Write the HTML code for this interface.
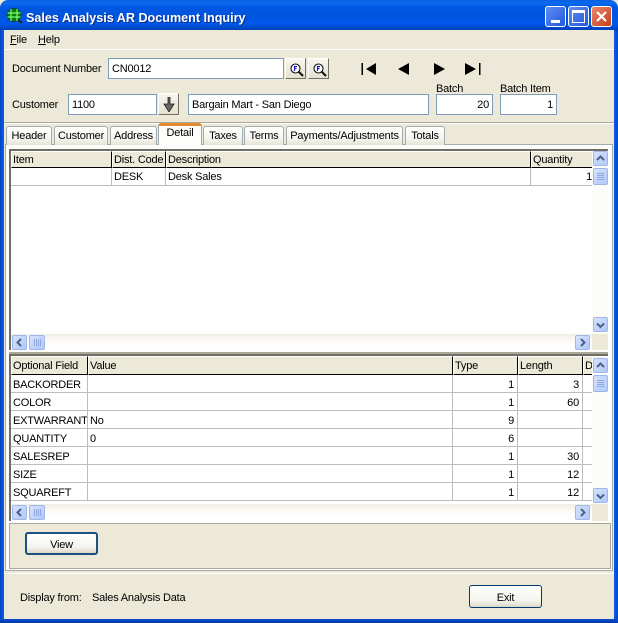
<!DOCTYPE html>
<html><head><meta charset="utf-8"><style>
html,body{margin:0;padding:0;background:#fff}
#w{position:relative;width:618px;height:623px;overflow:hidden;font:11px "Liberation Sans",sans-serif;letter-spacing:-.2px;color:#000;background:#ece9d8}
#w div,#w svg{position:absolute}
.t{white-space:nowrap;line-height:14px}
.in{background:#fff;border:1px solid #7f9db9;box-sizing:border-box;line-height:20px;padding-left:3px;white-space:nowrap}
.r{text-align:right;padding-right:3px;padding-left:0}
.tb{box-sizing:border-box;border:1px solid #a3acad;border-bottom:0;border-radius:3px 3px 0 0;background:linear-gradient(#fff,#f3f3ec 70%,#e6e3d4);text-align:center;line-height:18px;white-space:nowrap;height:19px;top:126px}
.ib{box-sizing:border-box;width:21px;height:21px;background:linear-gradient(#f6f5ee,#e4e1d0);border:1px solid;border-color:#fff #716f64 #716f64 #fff}
.h{background:#ece9d8;border-right:1px solid #000;border-left:1px solid #fff;border-top:1px solid #fff;box-sizing:border-box;line-height:16px;padding-left:1px;white-space:nowrap;overflow:hidden;border-bottom:1px solid #000}
.c{box-sizing:border-box;border-right:1px solid #bdbdbd;border-bottom:1px solid #bdbdbd;line-height:19px;padding-left:2px;white-space:nowrap;overflow:hidden;background:#fff}
.d{line-height:20px}
.n{text-align:right;padding-right:3px}
.sb{box-sizing:border-box;width:15px;height:15px;background:linear-gradient(135deg,#d6e2fe,#b0c8fa);border:1px solid #fff;border-radius:2px;outline:1px solid #9fb6e8;outline-offset:-1px}
.tr{background:repeating-conic-gradient(#fff 0 25%,#f9f8f2 0 50%) 0 0/2px 2px}
.th{background:linear-gradient(#efeee5,#fbfaf6 6px,#fff 12px)}
.btn{box-sizing:border-box;width:73px;height:23px;border:1px solid #003c74;border-radius:3px;background:linear-gradient(#fff,#f4f4ee 70%,#dcd8c8);text-align:center;line-height:24px}
</style></head><body><div id="w">
<div style="left:0;top:0;width:618px;height:30px;border-radius:8px 8px 0 0;background:linear-gradient(#0a5fe0 0,#0a6af0 3px,#0058e2 7px,#0054de 15px,#0058ea 24px,#0049c8 28px,#0040b8 30px)"></div>
<div style="left:0;top:30px;width:4px;height:593px;background:linear-gradient(90deg,#0040c0,#0855dd 50%,#0a5ae8)"></div>
<div style="left:614px;top:30px;width:4px;height:593px;background:linear-gradient(90deg,#0a5ae8,#0855dd 50%,#0040c0)"></div>
<div style="left:0;top:619px;width:618px;height:4px;background:linear-gradient(#0a4fd0,#0038a8)"></div>
<svg style="left:6px;top:8px" width="17" height="16" viewBox="0 0 17 16"><ellipse cx="8" cy="7" rx="7" ry="6.500" fill="#0c7a0c" stroke="#044"/><path d="M1.500 5h13M1.500 9h13M5 1v12M11 1v12" stroke="#7f7" stroke-width="1.200"/><path d="M12 12l4 3" stroke="#222" stroke-width="2"/></svg>
<div class="t" style="left:26px;top:11px;font:bold 12.6px/15px 'Liberation Sans',sans-serif;letter-spacing:0;color:#fff;text-shadow:1px 1px 0 #0a2d8a">Sales Analysis AR Document Inquiry</div>
<div style="left:545px;top:6px;width:21px;height:21px;box-sizing:border-box;border:1px solid #fff;border-radius:3px;background:linear-gradient(135deg,#5e8ff0,#2258dc)"><div style="left:5px;top:13px;width:9px;height:3px;background:#fff"></div></div>
<div style="left:568px;top:6px;width:21px;height:21px;box-sizing:border-box;border:1px solid #fff;border-radius:3px;background:linear-gradient(135deg,#5e8ff0,#2258dc)"><div style="left:3px;top:3px;width:13px;height:13px;box-sizing:border-box;border:1px solid #fff;border-top-width:3px"></div></div>
<div style="left:591px;top:6px;width:21px;height:21px;box-sizing:border-box;border:1px solid #fff;border-radius:3px;background:linear-gradient(135deg,#e8866a,#c4401c)"><svg style="left:4px;top:4px" width="11" height="11"><path d="M1 1l9 9M10 1l-9 9" stroke="#fff" stroke-width="2.200"/></svg></div>
<div class="t" style="left:10px;top:33px"><u>F</u>ile</div>
<div class="t" style="left:38px;top:33px"><u>H</u>elp</div>
<div style="left:4px;top:49px;width:610px;height:1px;background:#fff"></div>
<div class="t" style="left:12px;top:62px">Document Number</div>
<div class="in" style="left:108px;top:58px;width:176px;height:21px">CN0012</div>
<div class="ib" style="left:285px;top:58px"><svg style="left:3px;top:3px" width="15" height="15"><circle cx="6.500" cy="6.500" r="4.500" fill="#fff" stroke="#111" stroke-width="1.100"/><path d="M10 10l4 4" stroke="#111" stroke-width="2"/><path d="M5.500 9V4.500h2.500M5.500 6.500h2" stroke="#1a1ad0" stroke-width="1.200" fill="none"/></svg></div>
<div class="ib" style="left:308px;top:58px"><svg style="left:3px;top:3px" width="15" height="15"><circle cx="6.500" cy="6.500" r="4.500" fill="#fff" stroke="#111" stroke-width="1.100"/><path d="M10 10l4 4" stroke="#111" stroke-width="2"/><path d="M5.500 9V4.500h2.500M5.500 6.500h2" stroke="#1a1ad0" stroke-width="1.200" fill="none"/></svg></div>
<svg style="left:361px;top:63px" width="16" height="12"><path d="M0.500 0v12h1.500V0zM15 0v12L5 6z" fill="#000"/></svg>
<svg style="left:397px;top:63px" width="13" height="12"><path d="M12 0v12L1 6z" fill="#000"/></svg>
<svg style="left:433px;top:63px" width="13" height="12"><path d="M1 0v12L12 6z" fill="#000"/></svg>
<svg style="left:465px;top:63px" width="17" height="12"><path d="M0 0v12L11 6zM14 0v12h1.500V0z" fill="#000"/></svg>
<div class="t" style="left:12px;top:98px">Customer</div>
<div class="in" style="left:68px;top:94px;width:89px;height:21px">1100</div>
<div class="ib" style="left:158px;top:93px;height:22px"><svg style="left:4px;top:3px" width="13" height="15"><path d="M5 0h2v7h4l-5 8-5-8h4z" fill="#666" stroke="#222" stroke-width=".8"/></svg></div>
<div class="in" style="left:188px;top:94px;width:241px;height:21px">Bargain Mart - San Diego</div>
<div class="t" style="left:436px;top:82px">Batch</div>
<div class="t" style="left:500px;top:82px">Batch Item</div>
<div class="in r" style="left:436px;top:94px;width:57px;height:21px">20</div>
<div class="in r" style="left:500px;top:94px;width:57px;height:21px">1</div>
<div style="left:4px;top:122px;width:610px;height:1px;background:#aca899"></div>
<div style="left:4px;top:123px;width:610px;height:1px;background:#fff"></div>
<div style="left:5px;top:144px;width:608px;height:427px;box-sizing:border-box;border:1px solid #a3acad;background:#fdfdfb"></div>
<div class="tb" style="left:6px;width:46px">Header</div>
<div class="tb" style="left:54px;width:54px">Customer</div>
<div class="tb" style="left:110px;width:47px">Address</div>
<div class="tb" style="left:203px;width:40px">Taxes</div>
<div class="tb" style="left:244px;width:40px">Terms</div>
<div class="tb" style="left:286px;width:117px">Payments/Adjustments</div>
<div class="tb" style="left:405px;width:40px">Totals</div>
<div style="left:158px;top:123px;width:44px;height:22px;box-sizing:border-box;background:#fdfdfb;border:1px solid #a3acad;border-bottom:0;border-top:3px solid #e68b2c;border-radius:3px 3px 0 0;text-align:center;line-height:14px">Detail</div>
<div style="left:9px;top:149px;width:599px;height:201px;background:#fff;border-left:2px solid #716f64;border-top:2px solid #716f64;box-sizing:border-box"></div>
<div class="h" style="left:11px;top:151px;width:101px;height:17px">Item</div>
<div class="h" style="left:112px;top:151px;width:54px;height:17px">Dist. Code</div>
<div class="h" style="left:166px;top:151px;width:365px;height:17px">Description</div>
<div class="h" style="left:531px;top:151px;width:61px;height:17px;border-right:0">Quantity</div>
<div class="c" style="left:11px;top:168px;width:101px;height:18px"></div>
<div class="c" style="left:112px;top:168px;width:54px;height:18px">DESK</div>
<div class="c" style="left:166px;top:168px;width:365px;height:18px">Desk Sales</div>
<div class="c n" style="left:531px;top:168px;width:61px;height:18px;border-right:0;padding-right:0">1</div>
<div class="tr" style="left:592px;top:151px;width:16px;height:183px"></div>
<div class="sb" style="left:593px;top:151px"><svg style="left:2px;top:3px" width="9" height="7"><path d="M1 5l3.500-3.500L8 5" fill="none" stroke="#4d6185" stroke-width="2"/></svg></div>
<div class="sb" style="left:593px;top:168px;height:17px"><svg style="left:3px;top:4px" width="7" height="8"><path d="M0 .5h7M0 2.500h7M0 4.500h7M0 6.500h7" stroke="#8fa8e0"/></svg></div>
<div class="sb" style="left:593px;top:317px"><svg style="left:2px;top:4px" width="9" height="7"><path d="M1 1.500l3.500 3.500L8 1.500" fill="none" stroke="#4d6185" stroke-width="2"/></svg></div>
<div class="th" style="left:11px;top:334px;width:581px;height:16px"></div>
<div style="left:592px;top:334px;width:16px;height:16px;background:#ece9d8"></div>
<div class="sb" style="left:12px;top:335px"><svg style="left:3px;top:2px" width="7" height="9"><path d="M5 1L1.500 4.500 5 8" fill="none" stroke="#4d6185" stroke-width="2"/></svg></div>
<div class="sb" style="left:29px;top:335px;width:16px"><svg style="left:4px;top:3px" width="8" height="7"><path d="M.5 0v7M2.500 0v7M4.500 0v7M6.500 0v7" stroke="#8fa8e0"/></svg></div>
<div class="sb" style="left:575px;top:335px"><svg style="left:3px;top:2px" width="7" height="9"><path d="M2 1l3.500 3.500L2 8" fill="none" stroke="#4d6185" stroke-width="2"/></svg></div>
<div style="left:9px;top:352px;width:599px;height:2px;background:#aca899"></div>
<div style="left:9px;top:354px;width:599px;height:167px;background:#fff;border-left:2px solid #716f64;border-top:2px solid #716f64;box-sizing:border-box"></div>
<div class="h" style="left:11px;top:356px;width:77px;height:19px;line-height:18px">Optional Field</div>
<div class="h" style="left:88px;top:356px;width:365px;height:19px;line-height:18px">Value</div>
<div class="h" style="left:453px;top:356px;width:65px;height:19px;line-height:18px">Type</div>
<div class="h" style="left:518px;top:356px;width:65px;height:19px;line-height:18px">Length</div>
<div class="h" style="left:583px;top:356px;width:9px;height:19px;border-right:0;padding-left:1px;line-height:18px">D</div>
<div class="c d" style="left:11px;top:375px;width:77px;height:18px">BACKORDER</div><div class="c" style="left:88px;top:375px;width:365px;height:18px"></div><div class="c d n" style="left:453px;top:375px;width:65px;height:18px">1</div><div class="c d n" style="left:518px;top:375px;width:65px;height:18px">3</div><div class="c" style="left:583px;top:375px;width:9px;height:18px;border-right:0"></div>
<div class="c d" style="left:11px;top:393px;width:77px;height:18px">COLOR</div><div class="c" style="left:88px;top:393px;width:365px;height:18px"></div><div class="c d n" style="left:453px;top:393px;width:65px;height:18px">1</div><div class="c d n" style="left:518px;top:393px;width:65px;height:18px">60</div><div class="c" style="left:583px;top:393px;width:9px;height:18px;border-right:0"></div>
<div class="c d" style="left:11px;top:411px;width:77px;height:18px">EXTWARRANTY</div><div class="c d" style="left:88px;top:411px;width:365px;height:18px">No</div><div class="c d n" style="left:453px;top:411px;width:65px;height:18px">9</div><div class="c d n" style="left:518px;top:411px;width:65px;height:18px"></div><div class="c" style="left:583px;top:411px;width:9px;height:18px;border-right:0"></div>
<div class="c d" style="left:11px;top:429px;width:77px;height:18px">QUANTITY</div><div class="c d" style="left:88px;top:429px;width:365px;height:18px">0</div><div class="c d n" style="left:453px;top:429px;width:65px;height:18px">6</div><div class="c d n" style="left:518px;top:429px;width:65px;height:18px"></div><div class="c" style="left:583px;top:429px;width:9px;height:18px;border-right:0"></div>
<div class="c d" style="left:11px;top:447px;width:77px;height:18px">SALESREP</div><div class="c" style="left:88px;top:447px;width:365px;height:18px"></div><div class="c d n" style="left:453px;top:447px;width:65px;height:18px">1</div><div class="c d n" style="left:518px;top:447px;width:65px;height:18px">30</div><div class="c" style="left:583px;top:447px;width:9px;height:18px;border-right:0"></div>
<div class="c d" style="left:11px;top:465px;width:77px;height:18px">SIZE</div><div class="c" style="left:88px;top:465px;width:365px;height:18px"></div><div class="c d n" style="left:453px;top:465px;width:65px;height:18px">1</div><div class="c d n" style="left:518px;top:465px;width:65px;height:18px">12</div><div class="c" style="left:583px;top:465px;width:9px;height:18px;border-right:0"></div>
<div class="c d" style="left:11px;top:483px;width:77px;height:18px">SQUAREFT</div><div class="c" style="left:88px;top:483px;width:365px;height:18px"></div><div class="c d n" style="left:453px;top:483px;width:65px;height:18px">1</div><div class="c d n" style="left:518px;top:483px;width:65px;height:18px">12</div><div class="c" style="left:583px;top:483px;width:9px;height:18px;border-right:0"></div>
<div class="tr" style="left:592px;top:356px;width:16px;height:148px"></div>
<div class="sb" style="left:593px;top:358px"><svg style="left:2px;top:3px" width="9" height="7"><path d="M1 5l3.500-3.500L8 5" fill="none" stroke="#4d6185" stroke-width="2"/></svg></div>
<div class="sb" style="left:593px;top:375px;height:17px"><svg style="left:3px;top:4px" width="7" height="8"><path d="M0 .5h7M0 2.500h7M0 4.500h7M0 6.500h7" stroke="#8fa8e0"/></svg></div>
<div class="sb" style="left:593px;top:488px"><svg style="left:2px;top:4px" width="9" height="7"><path d="M1 1.500l3.500 3.500L8 1.500" fill="none" stroke="#4d6185" stroke-width="2"/></svg></div>
<div class="th" style="left:11px;top:504px;width:581px;height:17px"></div>
<div style="left:592px;top:504px;width:16px;height:17px;background:#ece9d8"></div>
<div class="sb" style="left:12px;top:505px"><svg style="left:3px;top:2px" width="7" height="9"><path d="M5 1L1.500 4.500 5 8" fill="none" stroke="#4d6185" stroke-width="2"/></svg></div>
<div class="sb" style="left:29px;top:505px;width:16px"><svg style="left:4px;top:3px" width="8" height="7"><path d="M.5 0v7M2.500 0v7M4.500 0v7M6.500 0v7" stroke="#8fa8e0"/></svg></div>
<div class="sb" style="left:575px;top:505px"><svg style="left:3px;top:2px" width="7" height="9"><path d="M2 1l3.500 3.500L2 8" fill="none" stroke="#4d6185" stroke-width="2"/></svg></div>
<div style="left:9px;top:523px;width:602px;height:46px;box-sizing:border-box;border:1px solid #aca899;background:#ece9d8"></div>
<div class="btn" style="left:25px;top:532px;border:2px solid #1c5180;line-height:22px">View</div>
<div style="left:4px;top:573px;width:610px;height:46px;background:#ece9d8;border-top:1px solid #fff;box-sizing:border-box"></div>
<div class="t" style="left:20px;top:591px">Display from:</div>
<div class="t" style="left:92px;top:591px">Sales Analysis Data</div>
<div class="btn" style="left:469px;top:585px">Exit</div>
</div></body></html>
